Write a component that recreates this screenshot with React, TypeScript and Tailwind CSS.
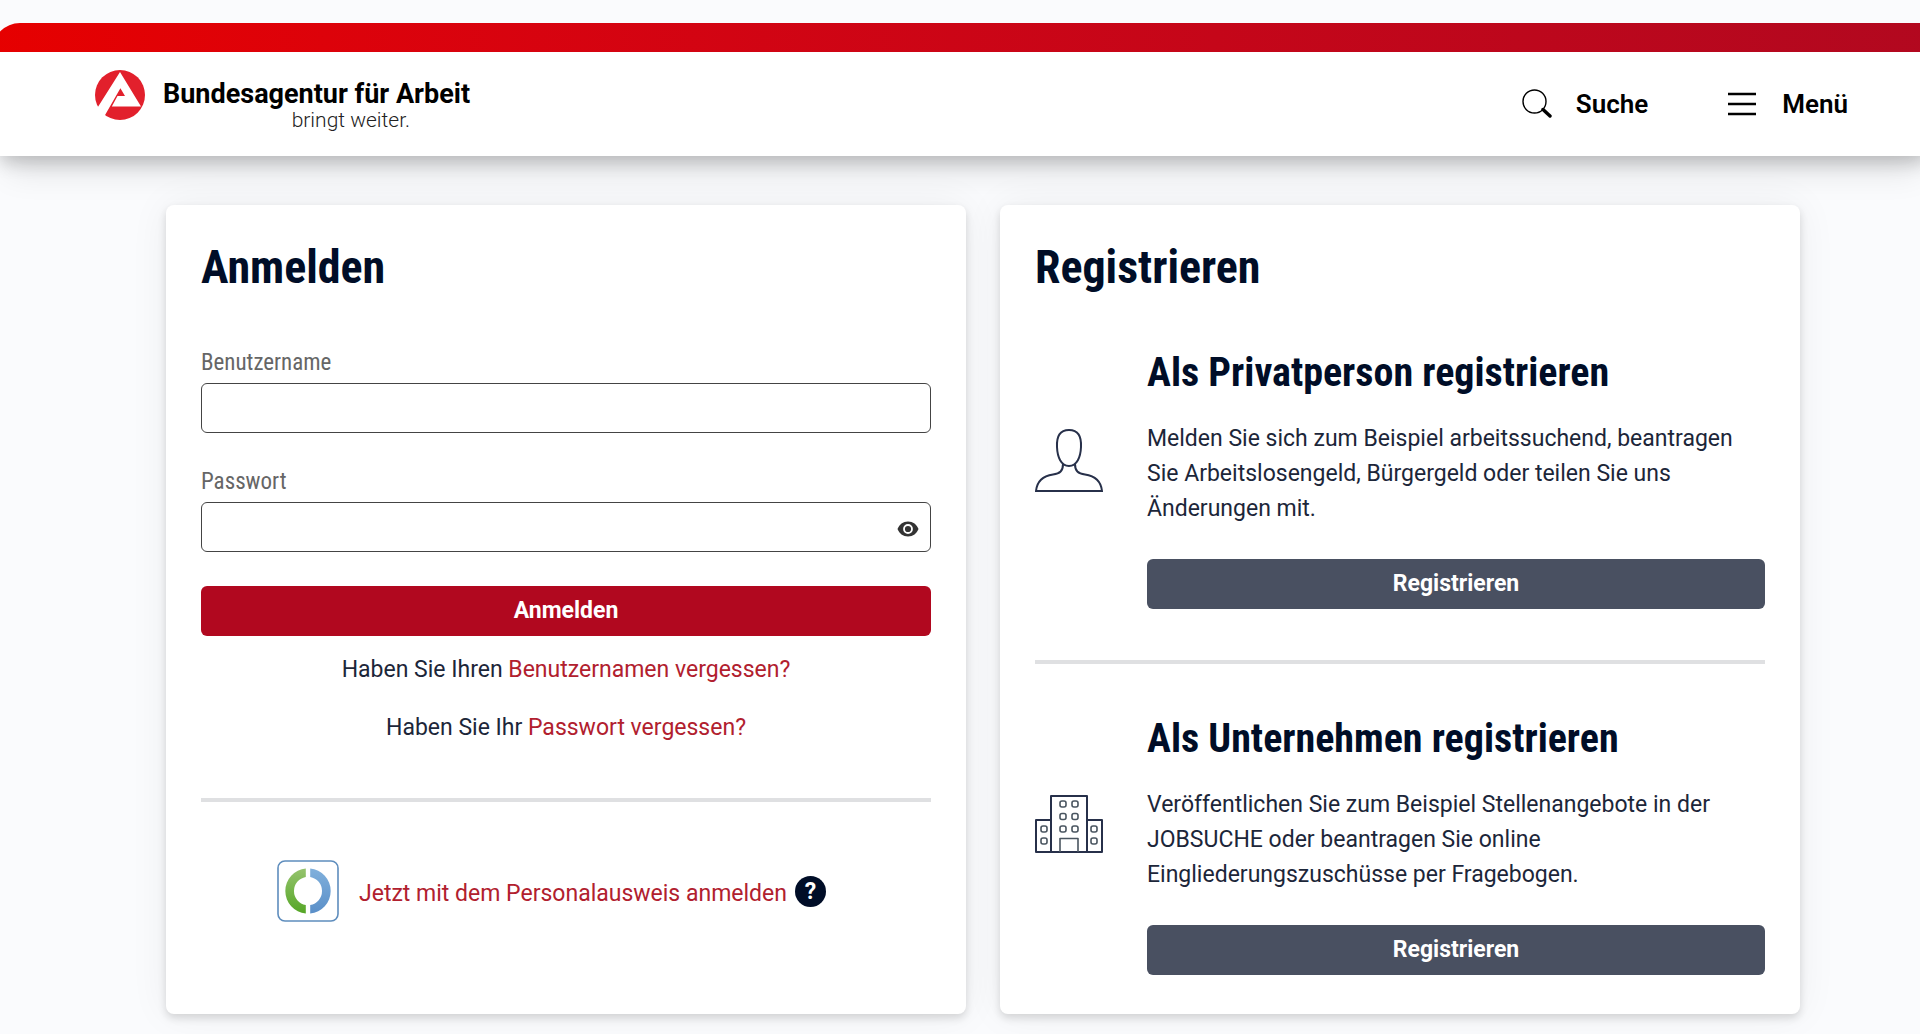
import React, { useState } from 'react';

interface RegisterOptionProps {
  title: string;
  text: string;
  icon: React.ReactNode;
}

const Logo: React.FC = () => (
  <svg viewBox="0 0 50 50" className="h-[50px] w-[50px] shrink-0" aria-hidden="true">
    <circle cx="25" cy="25" r="25" fill="#e2202c" />
    <path d="M25 2 L46 36.5 H16.8 L22.5 26 H30 L25.4 18.2 L9.5 46 L1 40 Z" fill="#fff" />
  </svg>
);

const SearchIcon: React.FC = () => (
  <svg viewBox="0 0 30 30" className="h-[30px] w-[30px]" fill="none" stroke="#000" aria-hidden="true">
    <circle cx="12.5" cy="12.5" r="11.5" strokeWidth="1.4" />
    <path d="M21 20.5 L28 27" strokeWidth="3.4" strokeLinecap="round" />
  </svg>
);

const MenuIcon: React.FC = () => (
  <svg viewBox="0 0 28 24" className="h-6 w-7" stroke="#000" strokeWidth="2.6" aria-hidden="true">
    <path d="M0 2 H28 M0 12 H28 M0 22 H28" />
  </svg>
);

const EyeIcon: React.FC = () => (
  <svg viewBox="0 0 22 16" className="h-4 w-[22px]" aria-hidden="true">
    <path d="M11 0.5 C6 0.5 2.2 3.6 0.5 8 C2.2 12.4 6 15.5 11 15.5 S19.8 12.4 21.5 8 C19.8 3.6 16 0.5 11 0.5 Z" fill="#333" />
    <circle cx="11" cy="8" r="4" fill="#333" stroke="#fff" strokeWidth="1.8" />
  </svg>
);

const PersonIcon: React.FC = () => (
  <svg viewBox="0 0 68 64" className="h-16 w-[68px]" fill="none" stroke="#27304a" strokeWidth="2" aria-hidden="true">
    <path d="M34 1 C25 1 21.5 7 22 18 C22.4 28 26 37 34 37 S45.6 28 46 18 C46.5 7 43 1 34 1 Z" />
    <path d="M28 35 C28 42 25 44.5 18 45.5 C8 47 2 52 1 62 H67 C66 52 60 47 50 45.5 C43 44.5 40 42 40 35" />
  </svg>
);

const BuildingIcon: React.FC = () => (
  <svg viewBox="0 0 68 58" className="h-[58px] w-[68px]" fill="none" stroke="#27304a" strokeWidth="2" strokeLinejoin="round" aria-hidden="true">
    <path d="M16 57 V1 H52 V57 M16 25 H1 V57 H67 V25 H52" />
    <g strokeWidth="1.6" stroke="#4a5560">
      <rect x="25" y="6" width="6" height="6" rx="2" />
      <rect x="37" y="6" width="6" height="6" rx="2" />
      <rect x="25" y="18.5" width="6" height="6" rx="2" />
      <rect x="37" y="18.5" width="6" height="6" rx="2" />
      <rect x="25" y="31" width="6" height="6" rx="2" />
      <rect x="37" y="31" width="6" height="6" rx="2" />
      <rect x="6" y="31" width="6" height="6" rx="2" />
      <rect x="6" y="43" width="6" height="6" rx="2" />
      <rect x="56" y="31" width="6" height="6" rx="2" />
      <rect x="56" y="43" width="6" height="6" rx="2" />
      <path d="M25 57 V43.5 H43 V57" />
    </g>
  </svg>
);

const IdCardIcon: React.FC = () => (
  <svg viewBox="0 0 62 62" className="h-[62px] w-[62px] shrink-0" fill="none" aria-hidden="true">
    <defs>
      <linearGradient id="eidGreen" x1="0" y1="0" x2="0" y2="1">
        <stop offset="0" stopColor="#95c36d" />
        <stop offset="1" stopColor="#55a626" />
      </linearGradient>
      <linearGradient id="eidBlue" x1="0" y1="0" x2="0" y2="1">
        <stop offset="0" stopColor="#80b0dc" />
        <stop offset="1" stopColor="#5a8fc8" />
      </linearGradient>
    </defs>
    <rect x="1" y="1" width="60" height="60" rx="7" stroke="#5e8dbd" strokeWidth="1.6" />
    <path d="M28.8 8.5 A22.6 22.6 0 0 0 28.8 53.5 V45 A14.2 14.2 0 0 1 28.8 17 Z" fill="url(#eidGreen)" />
    <path d="M33.2 8.5 A22.6 22.6 0 0 1 33.2 53.5 V45 A14.2 14.2 0 0 0 33.2 17 Z" fill="url(#eidBlue)" />
  </svg>
);

const RegisterOption: React.FC<RegisterOptionProps> = ({ title, text, icon }) => (
  <section className="flex items-start gap-11">
    <div className="mt-20 w-[68px] shrink-0">{icon}</div>
    <div className="flex-1">
      <h2 className="font-['Roboto_Condensed',Roboto,sans-serif] text-[40px] leading-12 font-bold text-[#000d27]">{title}</h2>
      <p className="mt-6 text-[23px] leading-[35px]">{text}</p>
      <button type="button" className="mt-[33px] h-[50px] w-full rounded-md bg-[#495061] text-[23px] font-bold text-white">
        Registrieren
      </button>
    </div>
  </section>
);

const App: React.FC = () => {
  const [showPassword, setShowPassword] = useState(false);

  return (
    <div className="min-h-screen overflow-hidden bg-[#fafbfd] pt-[23px] font-[Roboto,sans-serif] text-[#1c2639]">
      <header className="-mr-4 -ml-2 rounded-tl-[28px] bg-white shadow-[0_32px_32px_-16px_rgba(0,0,0,0.1),0_14px_18px_-8px_rgba(0,0,0,0.2)]">
        <div className="h-[29px] rounded-tl-[28px] bg-linear-to-r from-[#e60000] to-[#b2081f]" />
        <div className="flex h-[104px] items-center justify-between pr-[88px] pl-[103px]">
          <a href="#" className="flex items-start gap-[18px] pb-2 text-black">
            <Logo />
            <span className="flex flex-col pt-2">
              <span className="text-[27px] leading-8 font-bold">Bundesagentur für Arbeit</span>
              <span className="pr-15 text-right text-[21px] leading-5 font-light text-[#222]">bringt weiter.</span>
            </span>
          </a>
          <nav className="flex items-center gap-20 text-[26px] font-semibold text-black">
            <button type="button" className="flex items-center gap-6">
              <SearchIcon />
              Suche
            </button>
            <button type="button" className="flex items-center gap-[26px]">
              <MenuIcon />
              Menü
            </button>
          </nav>
        </div>
      </header>

      <main className="grid grid-cols-2 gap-[34px] pt-[49px] pr-[120px] pb-5 pl-[166px]">
        <section className="rounded-lg bg-white px-[35px] pt-8 pb-[39px] shadow-[0_4px_8px_rgba(0,0,0,0.14),0_0_40px_rgba(0,0,0,0.06)]">
          <h1 className="font-['Roboto_Condensed',Roboto,sans-serif] text-[46px] leading-[60px] font-bold text-[#000d27]">Anmelden</h1>
          <form className="mt-[43px]" onSubmit={(e) => e.preventDefault()}>
            <label htmlFor="username" className="block pt-0.5 font-['Roboto_Condensed',Roboto,sans-serif] text-[23px] leading-[41px] text-[#666]">
              Benutzername
            </label>
            <input id="username" type="text" className="block h-[50px] w-full rounded-md border border-[#444] px-4 text-[23px]" />
            <label htmlFor="password" className="mt-[26px] block pt-0.5 font-['Roboto_Condensed',Roboto,sans-serif] text-[23px] leading-[41px] text-[#666]">
              Passwort
            </label>
            <div className="relative">
              <input
                id="password"
                type={showPassword ? 'text' : 'password'}
                className="block h-[50px] w-full rounded-md border border-[#444] pr-12 pl-4 text-[23px]"
              />
              <button
                type="button"
                aria-label="Passwort anzeigen"
                onClick={() => setShowPassword(!showPassword)}
                className="absolute inset-y-0 right-3 flex items-center pt-1"
              >
                <EyeIcon />
              </button>
            </div>
            <button type="submit" className="mt-[34px] h-[50px] w-full rounded-md bg-[#b1081f] text-[23px] font-bold text-white">
              Anmelden
            </button>
          </form>
          <div className="mt-4 flex flex-col gap-[23px] text-center text-[23px] leading-[35px]">
            <p>
              Haben Sie Ihren <a href="#" className="text-[#b1202e]">Benutzernamen vergessen?</a>
            </p>
            <p>
              Haben Sie Ihr <a href="#" className="text-[#b1202e]">Passwort vergessen?</a>
            </p>
          </div>
          <hr className="mt-[53px] border-t-4 border-[#dfe0e2]" />
          <div className="mt-[58px] flex items-center pl-[76px]">
            <IdCardIcon />
            <a href="#" className="ml-5 pt-1 text-[23px] leading-[35px] text-[#b1202e]">Jetzt mit dem Personalausweis anmelden</a>
            <button type="button" aria-label="Hilfe" className="ml-2 h-[31px] w-[31px] rounded-full bg-[#000d27] text-[23px] leading-[31px] font-bold text-white">
              ?
            </button>
          </div>
        </section>

        <section className="rounded-lg bg-white px-[35px] pt-8 pb-[39px] shadow-[0_4px_8px_rgba(0,0,0,0.14),0_0_40px_rgba(0,0,0,0.06)]">
          <h1 className="font-['Roboto_Condensed',Roboto,sans-serif] text-[46px] leading-[60px] font-bold text-[#000d27]">Registrieren</h1>
          <div className="mt-[52px]">
            <RegisterOption
              title="Als Privatperson registrieren"
              text="Melden Sie sich zum Beispiel arbeitssuchend, beantragen Sie Arbeitslosengeld, Bürgergeld oder teilen Sie uns Änderungen mit."
              icon={<PersonIcon />}
            />
            <hr className="my-[51px] border-t-4 border-[#dfe0e2]" />
            <RegisterOption
              title="Als Unternehmen registrieren"
              text="Veröffentlichen Sie zum Beispiel Stellenangebote in der JOBSUCHE oder beantragen Sie online Eingliederungszuschüsse per Fragebogen."
              icon={<BuildingIcon />}
            />
          </div>
        </section>
      </main>
    </div>
  );
};

export default App;
